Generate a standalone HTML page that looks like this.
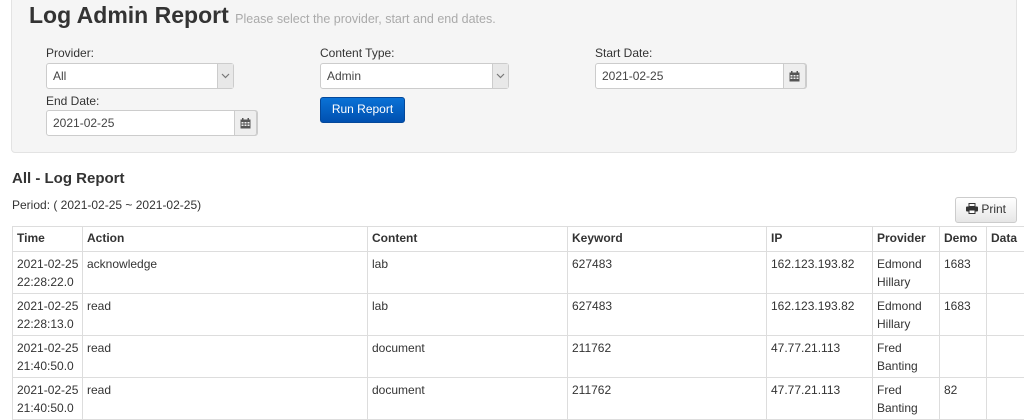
<!DOCTYPE html>
<html><head><meta charset="utf-8"><style>
*{box-sizing:border-box;margin:0;padding:0}
body{width:1024px;height:416px;overflow:hidden;background:#fff;font-family:"Liberation Sans",Arial,sans-serif;font-size:12px;color:#333;position:relative}
.well{position:absolute;left:11px;top:-5px;width:1006px;height:158px;background:#f5f5f5;border:1px solid #e3e3e3;border-radius:4px}
.a{position:absolute;white-space:nowrap}
h1{position:absolute;left:29px;top:2px;font-size:23px;font-weight:bold;color:#333}
h1 small{font-size:12.5px;font-weight:normal;color:#aaa}
.lbl{font-size:12px;color:#333}
.inp{position:absolute;height:26px;background:#fff;border:1px solid #ccc;border-radius:3px;font-size:12px;padding:5px 6px;color:#444}
.sel .arr{position:absolute;right:0;top:0;width:16px;height:24px;border-left:1px solid #ccc;background:#e8e8e8}
.add{position:absolute;right:0;top:-1px;width:23px;height:26px;border:1px solid #ccc;border-radius:0 3px 3px 0;background:#eee}
.btn{position:absolute;left:320px;top:97px;width:85px;height:26px;border-radius:3px;background:linear-gradient(#0a72d6,#0050b0);border:1px solid #04489a;color:#fff;font-size:12px;text-align:center;line-height:23px}
.print{position:absolute;left:955px;top:197px;width:62px;height:26px;border:1px solid #ccc;border-radius:3px;background:linear-gradient(#fff,#e6e6e6);font-size:12px;line-height:23px;text-align:center}
table{position:absolute;left:12px;top:226px;border-collapse:collapse;table-layout:fixed;width:1030px}
td,th{border:1px solid #ddd;vertical-align:top;text-align:left;padding:3px 4px;line-height:18px;font-size:12px;white-space:nowrap}
th{height:25px;line-height:17px}
td{height:42px;padding:3px 4px 2px}
</style></head><body>
<div class="well"></div>
<h1>Log Admin Report <small>Please select the provider, start and end dates.</small></h1>
<div class="a lbl" style="left:46px;top:46px">Provider:</div>
<div class="inp sel" style="left:46px;top:63px;width:188px">All<span class="arr"><svg width="15" height="24" viewBox="0 0 15 24"><path d="M4 10l3.5 3.5L11 10" fill="none" stroke="#777" stroke-width="1.2"/></svg></span></div>
<div class="a lbl" style="left:320px;top:46px">Content Type:</div>
<div class="inp sel" style="left:320px;top:63px;width:189px">Admin<span class="arr"><svg width="15" height="24" viewBox="0 0 15 24"><path d="M4 10l3.5 3.5L11 10" fill="none" stroke="#777" stroke-width="1.2"/></svg></span></div>
<div class="a lbl" style="left:595px;top:46px">Start Date:</div>
<div class="inp" style="left:595px;top:63px;width:212px">2021-02-25<span class="add"><svg width="11" height="11" viewBox="0 0 11 11" style="margin:7px 5px"><rect x="0.5" y="1.5" width="10" height="9" fill="#555"/><rect x="2" y="0" width="1.5" height="2.5" fill="#555"/><rect x="7.5" y="0" width="1.5" height="2.5" fill="#555"/><g fill="#eee"><rect x="1.5" y="4" width="2" height="1.5"/><rect x="4.5" y="4" width="2" height="1.5"/><rect x="7.5" y="4" width="2" height="1.5"/><rect x="1.5" y="6.5" width="2" height="1.5"/><rect x="4.5" y="6.5" width="2" height="1.5"/><rect x="7.5" y="6.5" width="2" height="1.5"/></g></svg></span></div>
<div class="a lbl" style="left:46px;top:94px">End Date:</div>
<div class="inp" style="left:46px;top:110px;width:212px">2021-02-25<span class="add"><svg width="11" height="11" viewBox="0 0 11 11" style="margin:7px 5px"><rect x="0.5" y="1.5" width="10" height="9" fill="#555"/><rect x="2" y="0" width="1.5" height="2.5" fill="#555"/><rect x="7.5" y="0" width="1.5" height="2.5" fill="#555"/><g fill="#eee"><rect x="1.5" y="4" width="2" height="1.5"/><rect x="4.5" y="4" width="2" height="1.5"/><rect x="7.5" y="4" width="2" height="1.5"/><rect x="1.5" y="6.5" width="2" height="1.5"/><rect x="4.5" y="6.5" width="2" height="1.5"/><rect x="7.5" y="6.5" width="2" height="1.5"/></g></svg></span></div>
<div class="btn">Run Report</div>
<div class="a" style="left:12px;top:170px;font-size:15px;font-weight:bold">All - Log Report</div>
<div class="a" style="left:12px;top:198px;font-size:12px">Period: ( 2021-02-25 ~ 2021-02-25)</div>
<div class="print"><svg width="12" height="11" viewBox="0 0 12 11" style="vertical-align:-1px"><rect x="3" y="0.5" width="6" height="3" fill="none" stroke="#333"/><rect x="0" y="3.5" width="12" height="5" rx="1" fill="#333"/><rect x="3" y="7" width="6" height="3.5" fill="#fff" stroke="#333"/></svg> Print</div>
<table>
<colgroup><col style="width:70px"><col style="width:285px"><col style="width:200px"><col style="width:199px"><col style="width:106px"><col style="width:67px"><col style="width:47px"><col style="width:56px"></colgroup>
<tr><th>Time</th><th>Action</th><th>Content</th><th>Keyword</th><th>IP</th><th>Provider</th><th>Demo</th><th>Data</th></tr>
<tr><td>2021-02-25<br>22:28:22.0</td><td>acknowledge</td><td>lab</td><td>627483</td><td>162.123.193.82</td><td>Edmond<br>Hillary</td><td>1683</td><td></td></tr>
<tr><td>2021-02-25<br>22:28:13.0</td><td>read</td><td>lab</td><td>627483</td><td>162.123.193.82</td><td>Edmond<br>Hillary</td><td>1683</td><td></td></tr>
<tr><td>2021-02-25<br>21:40:50.0</td><td>read</td><td>document</td><td>211762</td><td>47.77.21.113</td><td>Fred<br>Banting</td><td></td><td></td></tr>
<tr><td>2021-02-25<br>21:40:50.0</td><td>read</td><td>document</td><td>211762</td><td>47.77.21.113</td><td>Fred<br>Banting</td><td>82</td><td></td></tr>
</table>
</body></html>
